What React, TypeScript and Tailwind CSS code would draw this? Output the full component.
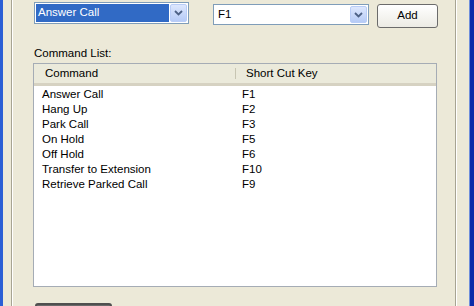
const commands = [
  { name: "Answer Call", key: "F1" },
  { name: "Hang Up", key: "F2" },
  { name: "Park Call", key: "F3" },
  { name: "On Hold", key: "F5" },
  { name: "Off Hold", key: "F6" },
  { name: "Transfer to Extension", key: "F10" },
  { name: "Retrieve Parked Call", key: "F9" },
];

const Chevron = () => (
  <svg width="9" height="6" viewBox="0 0 9 6">
    <path d="M1 1 L4.5 4.5 L8 1" fill="none" stroke="#4d6185" strokeWidth="1.8" />
  </svg>
);

const DropButton = () => (
  <div className="flex h-full w-[17px] items-center justify-center rounded-[2px] border border-[#b9cdf7] bg-gradient-to-b from-[#dde7fd] to-[#b6cbf6]">
    <Chevron />
  </div>
);

const App = () => {
  return (
    <div
      className="flex h-[306px] w-[474px] overflow-hidden bg-[#ECE9D8] text-[11.5px] text-black"
      style={{ fontFamily: '"Liberation Sans", Arial, sans-serif' }}
    >
      <div className="w-[3px] bg-[#2b5fd5]" />
      <div className="w-[8px]" />
      <div className="w-[1px] bg-[#a7a493]" />
      <div className="w-[1px] bg-white" />

      <div className="flex w-[442px] flex-col pl-[20px]">
        <div className="flex h-[28px] shrink-0 items-start pl-[1px]">
          <div className="mt-[2px] flex h-[22px] w-[155px] items-stretch border border-[#7f9db9] bg-white p-[1px]">
            <div className="flex flex-1 items-center bg-[#316ac5] pl-[2px] text-white">
              Answer Call
            </div>
            <div className="ml-[1px]">
              <DropButton />
            </div>
          </div>
          <div className="ml-[24px] mt-[4px] flex h-[21px] w-[156px] items-stretch border border-[#7f9db9] bg-white p-[1px]">
            <div className="flex flex-1 items-center pl-[3px]">F1</div>
            <DropButton />
          </div>
          <button className="ml-[8px] mt-[4px] h-[24px] w-[61px] rounded-[3px] border border-[#6b6b6b] bg-gradient-to-b from-white to-[#ecebe4]">
            Add
          </button>
        </div>

        <div className="mt-[18px] shrink-0 pl-[1px] leading-[14px]">Command List:</div>

        <div className="mt-[3px] flex h-[224px] w-[404px] shrink-0 flex-col border border-[#a5acb5] bg-white">
          <div className="flex h-[22px] w-[402px] border-b-[3px] border-[#d6d2c2] bg-[#ebeadb]">
            <div className="flex w-[201px] items-center pl-[11px]">Command</div>
            <div className="my-[4px] w-[1px] bg-[#c7c5b2]" />
            <div className="flex w-[198px] items-center pl-[10px]">Short Cut Key</div>
          </div>
          <div className="flex flex-col pt-[1px]">
            {commands.map((c) => (
              <div key={c.name} className="flex h-[15px] items-center">
                <div className="w-[201px] pl-[8px]">{c.name}</div>
                <div className="pl-[7px]">{c.key}</div>
              </div>
            ))}
          </div>
        </div>

        <button className="ml-[2px] mt-[16px] h-[24px] w-[77px] shrink-0 rounded-[3px] border-2 border-[#4f4f4f] bg-[#6a6a6a]" />
      </div>

      <div className="w-[1px] bg-[#a7a493]" />
      <div className="w-[1px] bg-white" />
      <div className="w-[12px]" />
      <div className="w-[1px] bg-[#6f8fdc]" />
      <div className="w-[4px] bg-[#0a2ba8]" />
    </div>
  );
};

export default App;
